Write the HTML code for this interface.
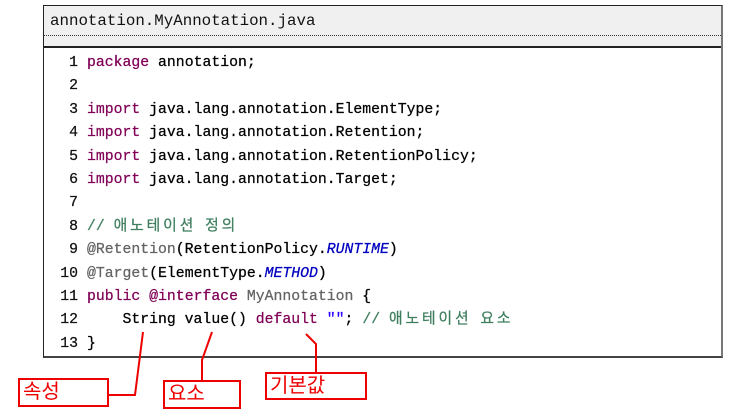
<!DOCTYPE html><html><head><meta charset="utf-8"><style>
body{margin:0;width:753px;height:417px;background:#fff;position:relative;overflow:hidden;font-family:"Liberation Mono","Noto Sans CJK KR",monospace}
.box{position:absolute;left:43px;top:5px;width:677px;height:350px;border:1px solid #222;border-right:2px solid #777;border-bottom:2px solid #444;}
.hd{position:absolute;left:0;top:0;right:0;height:40px;background:#f0f0f0;border-bottom:2px solid #222}
.hd .t{position:absolute;left:6px;top:6px;font-size:15.8px;color:#111;font-family:"Liberation Mono","Noto Sans CJK KR",monospace}
.hd .d{position:absolute;left:0;right:0;top:29px;border-top:1px dotted #333}
.code{position:absolute;left:0;top:46px;font-size:14.8px;line-height:23.4px;color:#000;white-space:pre;-webkit-text-stroke:0.25px}
.ln{display:inline-block;width:34px;text-align:right;margin-right:9px;color:#111}
.k{color:#7f0055}.a{color:#646464}.c{color:#3f7f5f}.i{color:#0000c0;font-style:italic}.s{color:#2a00ff}
.ko{letter-spacing:2.9px}
.lb{position:absolute;border:2px solid #e00;color:#e00;font-size:20px;font-family:"Liberation Sans","Noto Sans CJK KR",sans-serif;line-height:24px;padding-left:3px;box-sizing:border-box}
</style></head><body>
<div class="box"><div class="hd"><span class="t">annotation.MyAnnotation.java</span><div class="d"></div></div>
<div class="code"><span class="ln">1</span><span class="k">package</span> annotation;
<span class="ln">2</span>
<span class="ln">3</span><span class="k">import</span> java.lang.annotation.ElementType;
<span class="ln">4</span><span class="k">import</span> java.lang.annotation.Retention;
<span class="ln">5</span><span class="k">import</span> java.lang.annotation.RetentionPolicy;
<span class="ln">6</span><span class="k">import</span> java.lang.annotation.Target;
<span class="ln">7</span>
<span class="ln">8</span><span class="c">// <span class="ko">애노테이션</span> <span class="ko">정의</span></span>
<span class="ln">9</span><span class="a">@Retention</span>(RetentionPolicy.<span class="i">RUNTIME</span>)
<span class="ln">10</span><span class="a">@Target</span>(ElementType.<span class="i">METHOD</span>)
<span class="ln">11</span><span class="k">public</span> <span class="k">@interface</span> <span class="a">MyAnnotation</span> {
<span class="ln">12</span>    String value() <span class="k">default</span> <span class="s">""</span>; <span class="c">// <span class="ko">애노테이션</span> <span class="ko">요소</span></span>
<span class="ln">13</span>}</div></div>
<svg style="position:absolute;left:0;top:0" width="753" height="417"><g stroke="#e00" stroke-width="2" fill="none"><polyline points="143,332 135,395 108,395"/><polyline points="212,332 202,360 202,380"/><polyline points="306,334 316,344 316,372"/></g></svg>
<div class="lb" style="left:18px;top:378px;width:91px;height:29px">속성</div>
<div class="lb" style="left:163px;top:380px;width:78px;height:29px">요소</div>
<div class="lb" style="left:265px;top:372px;width:102px;height:28px">기본값</div>
</body></html>
